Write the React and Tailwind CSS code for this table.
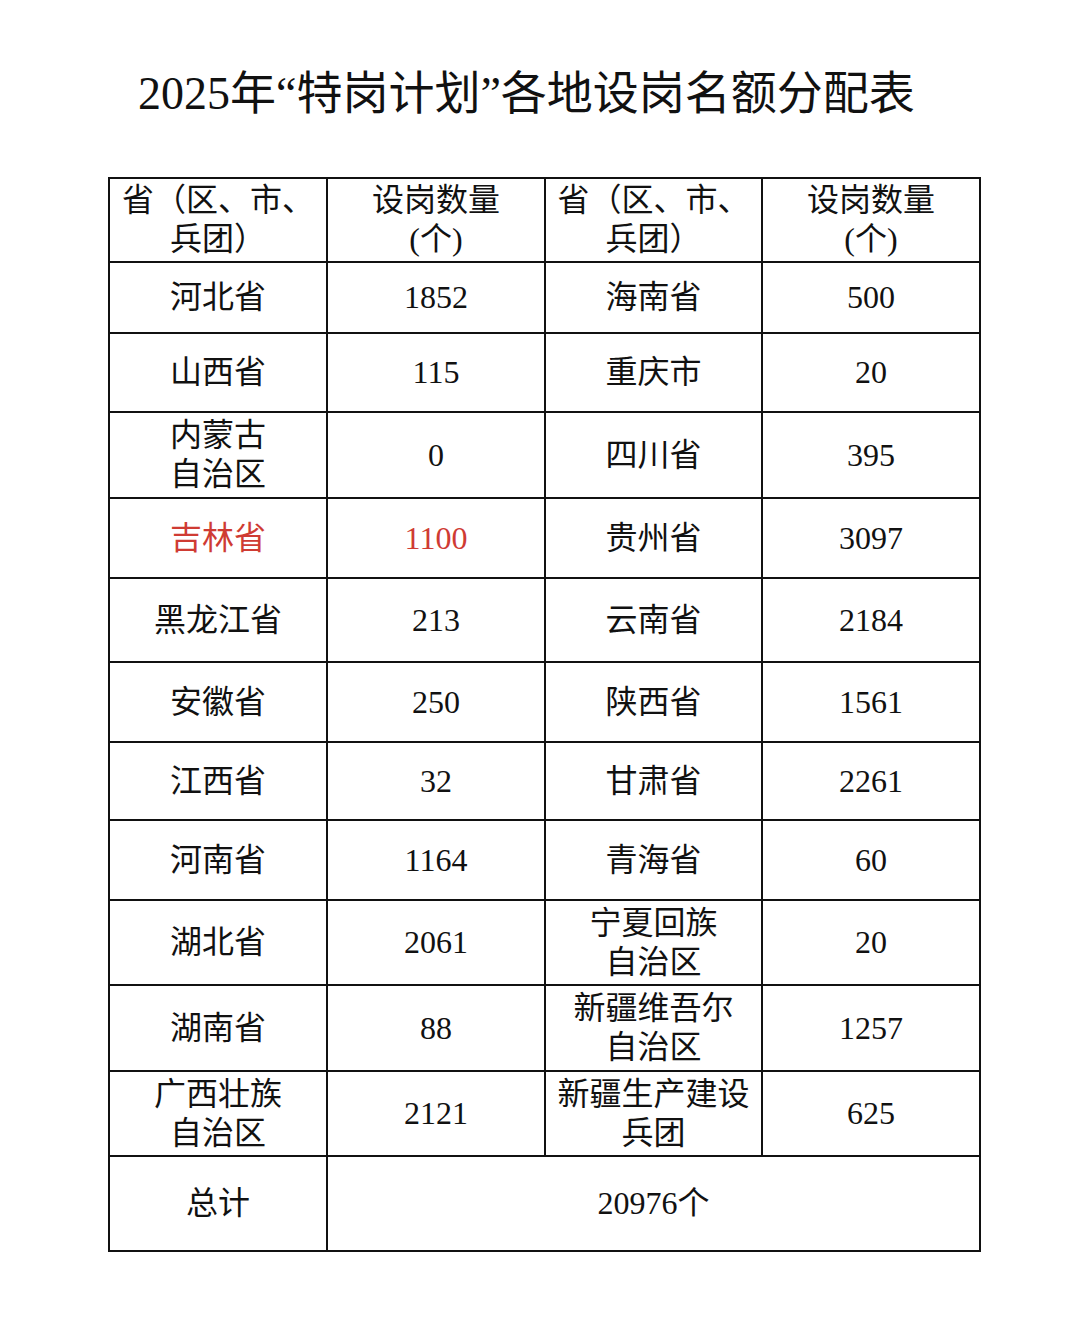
const rows = [
  { h: 'h-[71px]', a: '河北省', an: '1852', b: '海南省', bn: '500' },
  { h: 'h-[79px]', a: '山西省', an: '115', b: '重庆市', bn: '20' },
  { h: 'h-[86px]', a: ['内蒙古', '自治区'], an: '0', b: '四川省', bn: '395' },
  { h: 'h-[80px]', a: '吉林省', an: '1100', b: '贵州省', bn: '3097', red: true },
  { h: 'h-[84px]', a: '黑龙江省', an: '213', b: '云南省', bn: '2184' },
  { h: 'h-[80px]', a: '安徽省', an: '250', b: '陕西省', bn: '1561' },
  { h: 'h-[78px]', a: '江西省', an: '32', b: '甘肃省', bn: '2261' },
  { h: 'h-[80px]', a: '河南省', an: '1164', b: '青海省', bn: '60' },
  { h: 'h-[85px]', a: '湖北省', an: '2061', b: ['宁夏回族', '自治区'], bn: '20' },
  { h: 'h-[86px]', a: '湖南省', an: '88', b: ['新疆维吾尔', '自治区'], bn: '1257' },
  { h: 'h-[85px]', a: ['广西壮族', '自治区'], an: '2121', b: ['新疆生产建设', '兵团'], bn: '625' },
]

function Lines({ v }) {
  if (!Array.isArray(v)) return v
  return v.map((line, i) => (
    <span key={i} className="block">
      {line}
    </span>
  ))
}

// serif digits, sans CJK glyphs
const mixed = "font-['Liberation_Serif','Times_New_Roman','Noto_Sans_CJK_SC',serif]"
const cell = `border-2 border-[#111] text-center align-middle p-0 ${mixed}`

export default function App() {
  return (
    <div className={`w-[1080px] min-h-[1335px] bg-white text-[#111] ${mixed}`}>
      <h1 className={`pt-[66px] pl-[138px] text-[46px] leading-[56px] font-normal whitespace-nowrap ${mixed}`}>
        2025年“特岗计划”各地设岗名额分配表
      </h1>

      <table className="mt-[55px] ml-[108px] w-[871px] border-collapse table-fixed text-[32px] leading-[39px]">
        <colgroup>
          <col className="w-[218px]" />
          <col className="w-[218px]" />
          <col className="w-[217px]" />
          <col className="w-[218px]" />
        </colgroup>
        <tbody>
          <tr className="h-[84px]">
            <td className={cell}>
              <span className="block">省（区、市、</span>
              <span className="block">兵团）</span>
            </td>
            <td className={cell}>
              <span className="block">设岗数量</span>
              <span className="block">(个)</span>
            </td>
            <td className={cell}>
              <span className="block">省（区、市、</span>
              <span className="block">兵团）</span>
            </td>
            <td className={cell}>
              <span className="block">设岗数量</span>
              <span className="block">(个)</span>
            </td>
          </tr>
          {rows.map((r, i) => (
            <tr key={i} className={r.h}>
              <td className={`${cell} ${r.red ? 'text-[#cf3b33]' : ''}`}>
                <Lines v={r.a} />
              </td>
              <td className={`${cell} ${r.red ? 'text-[#cf3b33]' : ''}`}>{r.an}</td>
              <td className={`${cell} whitespace-nowrap`}>
                <Lines v={r.b} />
              </td>
              <td className={cell}>{r.bn}</td>
            </tr>
          ))}
          <tr className="h-[95px]">
            <td className={cell}>总计</td>
            <td className={cell} colSpan={3}>
              20976个
            </td>
          </tr>
        </tbody>
      </table>
    </div>
  )
}
